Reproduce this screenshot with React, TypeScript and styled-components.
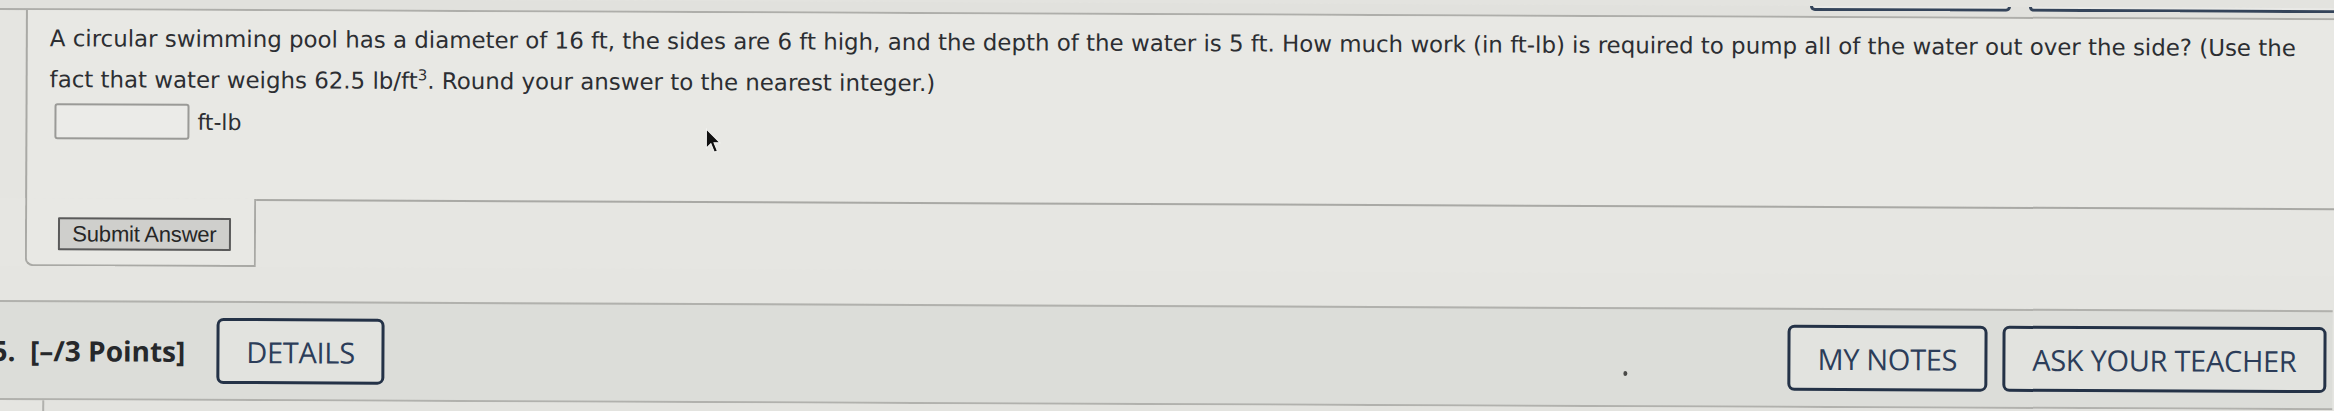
import React from 'react'
import styled, { createGlobalStyle } from 'styled-components'

const GlobalStyle = createGlobalStyle`
  html, body {
    margin: 0;
    padding: 0;
    background: #e3e3df;
    overflow: hidden;
  }
`

const Page = styled.div`
  position: relative;
  width: 2360px;
  height: 430px;
  margin-top: -2px;
  background: #e5e5e1;
  color: #2c2e32;
  transform: rotate(0.25deg);
  transform-origin: 0 0;
  font-family: "DejaVu Sans", Verdana, sans-serif;
`

const PrevStrip = styled.div`
  height: 10px;
  border-bottom: 2px solid #aeaeaa;
  display: flex;
  justify-content: flex-start;
  gap: 18px;
  padding-left: 1810px;
  background: #e1e1dd;
`

const PrevButton = styled.div<{ w: number }>`
  width: ${p => p.w}px;
  height: 2px;
  border: 3px solid #34445a;
  border-top: none;
  border-radius: 0 0 6px 6px;
  background: #e9e9e6;
`

const Body = styled.div`
  box-sizing: border-box;
  height: 188px;
  margin-left: 26px;
  border-left: 2px solid #a9a9a5;
  padding: 8px 30px 0 22px;
  width: 2334px;
  background: #e8e8e4;
`

const Question = styled.p`
  margin: 0;
  font-size: 22.9px;
  line-height: 41px;
  sup {
    font-size: 15px;
    line-height: 0;
  }
`

const AnswerRow = styled.div`
  display: flex;
  align-items: center;
  gap: 8px;
  margin-top: 3px;
  margin-left: 5px;
`

const AnswerInput = styled.div`
  box-sizing: border-box;
  width: 135px;
  height: 36px;
  border: 2px solid #9a9a97;
  border-radius: 3px;
  background: #ebebe8;
`

const Unit = styled.span`
  font-size: 22px;
`

const Footer = styled.div`
  display: flex;
  align-items: flex-start;
  background: #e6e6e2;
`

const SubmitCell = styled.div`
  box-sizing: border-box;
  width: 231px;
  height: 68px;
  margin-left: 26px;
  border: 2px solid #a9a9a5;
  border-top: none;
  border-bottom-left-radius: 8px;
  padding: 19px 0 0 31px;
  background: #e8e8e4;
`

const SubmitButton = styled.button`
  box-sizing: border-box;
  width: 173px;
  height: 33px;
  padding: 0;
  background: #cfcfcc;
  border: 2px solid #5a5a5a;
  border-radius: 1px;
  color: #262626;
  font-family: "Liberation Sans", Arial, sans-serif;
  font-size: 22px;
  letter-spacing: -0.2px;
`

const FooterRest = styled.div`
  flex: 1;
  border-top: 2px solid #a9a9a5;
`

const Header = styled.div`
  box-sizing: border-box;
  height: 100px;
  margin-top: 34px;
  border-top: 2px solid #b1b1ad;
  border-bottom: 2px solid #b1b1ad;
  background: #dcddd9;
  display: flex;
  align-items: center;
  width: 2334px;
  padding-right: 6px;
`

const PointsLabel = styled.span`
  margin-left: -7px;
  font-family: "Open Sans", "Noto Sans", sans-serif;
  font-weight: 700;
  font-size: 28px;
  color: #26282b;
  white-space: pre;
`

const OutlineButton = styled.button`
  box-sizing: border-box;
  height: 66px;
  padding: 0 27px;
  background: #e2e3df;
  border: 3px solid #243247;
  border-radius: 7px;
  color: #2c3d59;
  font-family: "Open Sans", "Noto Sans", sans-serif;
  font-weight: 500;
  font-size: 29px;
  letter-spacing: -0.3px;
`

const DetailsButton = styled(OutlineButton)`
  margin-left: 31px;
`

const HeaderGroup = styled.div`
  display: flex;
  gap: 15px;
  margin-left: auto;
`

const Below = styled.div`
  height: 20px;
  margin-left: 44px;
  border-left: 2px solid #b1b1ad;
  background: #e3e3df;
`

const Cursor = styled.svg`
  position: absolute;
  left: 706px;
  top: 127px;
`

const Speck = styled.div`
  position: absolute;
  left: 1625px;
  top: 366px;
  width: 4px;
  height: 5px;
  border-radius: 50%;
  background: #4a4a48;
`

export default function App() {
  return (
    <>
      <GlobalStyle />
      <Page>
        <PrevStrip>
          <PrevButton w={198} />
          <PrevButton w={330} />
        </PrevStrip>
        <Body>
          <Question>
            A circular swimming pool has a diameter of 16 ft, the sides are 6 ft high, and the depth of the water is 5 ft. How much work (in ft-lb) is required to pump all of the water out over the side? (Use the fact that water weighs 62.5 lb/ft<sup>3</sup>. Round your answer to the nearest integer.)
          </Question>
          <AnswerRow>
            <AnswerInput />
            <Unit>ft-lb</Unit>
          </AnswerRow>
        </Body>
        <Footer>
          <SubmitCell>
            <SubmitButton>Submit Answer</SubmitButton>
          </SubmitCell>
          <FooterRest />
        </Footer>
        <Header>
          <PointsLabel>5.  [–/3 Points]</PointsLabel>
          <DetailsButton>DETAILS</DetailsButton>
          <HeaderGroup>
            <OutlineButton>MY NOTES</OutlineButton>
            <OutlineButton>ASK YOUR TEACHER</OutlineButton>
          </HeaderGroup>
        </Header>
        <Below />
        <Cursor width="16" height="26" viewBox="0 0 16 26">
          <path d="M1 1 L1 20 L5.5 15.5 L9 24 L12 22.8 L8.6 14.6 L14.5 14.5 Z" fill="#111" stroke="#f4f4f2" strokeWidth="1" />
        </Cursor>
        <Speck />
      </Page>
    </>
  )
}
